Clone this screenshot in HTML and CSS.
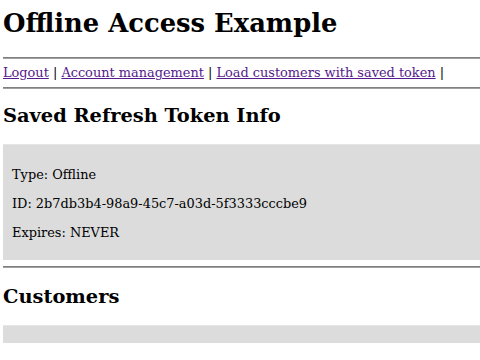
FILE: index.html
```html
<!DOCTYPE html>
<html>
<head>
<meta charset="utf-8">
<link rel="stylesheet" href="styles.css">
</head>
<body>
<h1 class="title">Offline Access Example</h1>
<hr class="rule">
<div class="nav"><a href="#">Logout</a> | <a href="#">Account management</a> | <a href="#">Load customers with saved token</a> |</div>
<hr class="rule">
<h2 class="section">Saved Refresh Token Info</h2>
<div class="box info">
<p class="line">Type: Offline</p>
<p class="line">ID: 2b7db3b4-98a9-45c7-a03d-5f3333cccbe9</p>
<p class="line">Expires: NEVER</p>
</div>
<hr class="rule after-box">
<h2 class="section customers">Customers</h2>
<div class="box empty"></div>
</body>
</html>
```
FILE: styles.css
```css
html, body {
  margin: 0;
  padding: 0;
  background: #fff;
}
body {
  font-family: "DejaVu Serif", serif;
  font-size: 12.9px;
  line-height: 15px;
  color: #000;
  padding: 0 0 0 3px;
  overflow: hidden;
}
.title {
  font-size: 25.8px;
  line-height: 30px;
  margin: 8px 0 19px;
}
.rule {
  margin: 0;
  border: 0;
  height: 0;
  border-top: 1px solid #808080;
  border-bottom: 1px solid #a0a0a0;
}
.nav {
  padding: 6px 0 7px;
  white-space: nowrap;
}
.nav a {
  color: #551a8b;
}
.section {
  font-size: 19.4px;
  line-height: 23px;
  margin: 15px 0 17px;
}
.box {
  background: #dcdcdc;
  border-top: 1px solid #e6e6e6;
}
.info {
  padding: 22px 9px 20px;
}
.line {
  margin: 0 0 14px;
}
.line:last-child {
  margin-bottom: 0;
}
.after-box {
  margin-top: 6px;
}
.customers {
  margin-top: 17px;
}
.empty {
  height: 17px;
}
```
